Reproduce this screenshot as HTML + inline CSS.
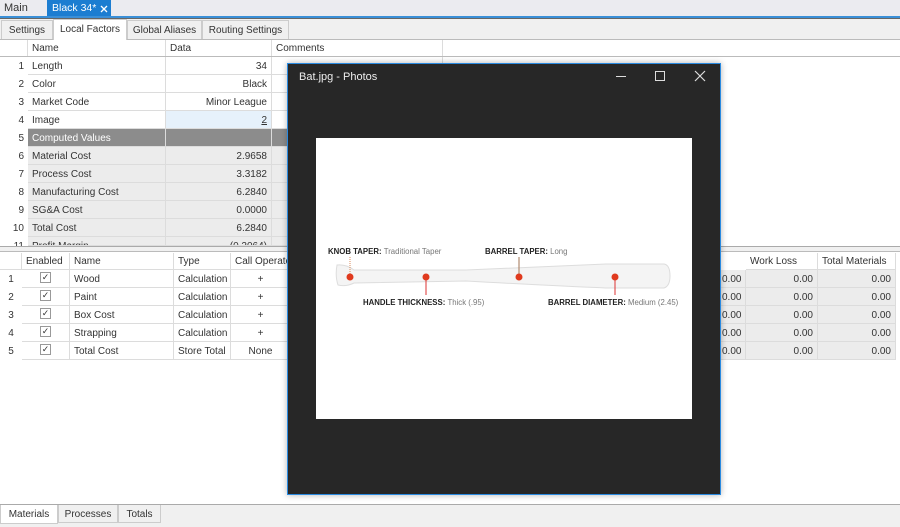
<!DOCTYPE html>
<html><head><style>
*{margin:0;padding:0;box-sizing:border-box}
body{width:900px;height:527px;position:relative;overflow:hidden;background:#fff;font-family:"Liberation Sans",sans-serif;font-size:10px;color:#333}
.a{position:absolute}
.c{position:absolute;height:18px;line-height:20px;white-space:nowrap;overflow:hidden;padding:0 4px;border-right:1px solid #dcdcdc;border-bottom:1px solid #dcdcdc}
.r{text-align:right}.m{text-align:center}
.cb{display:inline-block;width:11px;height:11px;border:1px solid #999;background:#fff;vertical-align:middle;position:relative;top:-1px;font-size:9px;line-height:9px;text-align:center;color:#333}
.tab{position:absolute;top:20px;height:19px;line-height:20px;text-align:center;border:1px solid #ccc;border-bottom:none;background:#f0f0f0;font-size:10px}
.bt{position:absolute;top:505px;height:18px;line-height:19px;text-align:center;border:1px solid #ccc;border-top:none;background:#f0f0f0}
</style></head><body>
<div class="a" style="left:0;top:0;width:900px;height:17px;background:#ebebf0"></div>
<div class="a" style="left:4px;top:2px;font-size:11px">Main</div>
<div class="a" style="left:47px;top:0;width:64px;height:17px;background:#1c7dd1"></div>
<div class="a" style="left:52px;top:2px;color:#fff;font-size:10.5px;white-space:nowrap">Black 34*</div>
<svg class="a" style="left:100px;top:5px" width="8" height="8"><path d="M1 1L7 7M7 1L1 7" stroke="#fff" stroke-width="1.3"/></svg>
<div class="a" style="left:0;top:16px;width:900px;height:2px;background:#3a8fd8"></div>
<div class="a" style="left:0;top:18px;width:900px;height:1px;background:#666"></div>
<div class="a" style="left:0;top:19px;width:900px;height:21px;background:#f0f0f0;border-bottom:1px solid #bbb"></div>
<div class="tab" style="left:1px;width:52px">Settings</div>
<div class="tab" style="left:53px;width:74px;top:19px;height:21px;background:#fff">Local Factors</div>
<div class="tab" style="left:127px;width:75px">Global Aliases</div>
<div class="tab" style="left:202px;width:87px">Routing Settings</div>

<div class="a" style="left:0;top:40px;width:900px;height:207px;overflow:hidden">
<div class="c" style="left:0;top:0;width:28px;height:17px;line-height:18px"></div>
<div class="c" style="left:28px;top:0;width:138px;height:17px;line-height:18px">Name</div>
<div class="c" style="left:166px;top:0;width:106px;height:17px;line-height:18px">Data</div>
<div class="c" style="left:272px;top:0;width:171px;height:17px;line-height:18px">Comments</div>
<div class="a" style="left:0;top:16px;width:900px;height:1px;background:#bbb"></div>
</div>
<div id="ug"></div>
<div class="a" style="left:0;top:246px;width:900px;height:1px;background:#aaa"></div>
<div class="a" style="left:0;top:247px;width:900px;height:5px;background:#f0f0f0;border-bottom:1px solid #bbb"></div>

<div class="c" style="left:0;top:253px;width:22px;height:17px;line-height:18px"></div>
<div class="c" style="left:22px;top:253px;width:48px;height:17px;line-height:18px">Enabled</div>
<div class="c" style="left:70px;top:253px;width:104px;height:17px;line-height:18px">Name</div>
<div class="c" style="left:174px;top:253px;width:57px;height:17px;line-height:18px">Type</div>
<div class="c" style="left:231px;top:253px;width:60px;height:17px;line-height:18px">Call Operator</div>
<div class="c" style="left:746px;top:253px;width:72px;height:17px;line-height:18px">Work Loss</div>
<div class="c" style="left:818px;top:253px;width:78px;height:17px;line-height:18px">Total Materials</div>
<div id="lg"></div>

<div class="a" style="left:0;top:504px;width:900px;height:23px;background:#f0f0f0;border-top:1px solid #aaa"></div>
<div class="bt" style="left:0;width:58px;background:#fff;height:19px">Materials</div>
<div class="bt" style="left:58px;width:60px">Processes</div>
<div class="bt" style="left:118px;width:43px">Totals</div>

<div class="a" style="left:287px;top:63px;width:434px;height:432px;background:#272727;border:1px solid #2a8ae0;box-shadow:0 0 6px rgba(0,0,0,.3)"></div>
<div class="a" style="left:299px;top:71px;color:#eee;font-size:11px">Bat.jpg - Photos</div>
<div class="a" style="left:616px;top:76px;width:10px;height:1px;background:#ddd"></div>
<div class="a" style="left:655px;top:71px;width:10px;height:10px;border:1px solid #ddd"></div>
<svg class="a" style="left:694px;top:70px" width="12" height="12"><path d="M1 1L11 11M11 1L1 11" stroke="#ddd" stroke-width="1.2"/></svg>
<div class="a" style="left:316px;top:138px;width:376px;height:281px;background:#fff"></div>
<svg class="a" style="left:316px;top:138px" width="376" height="281">
<path d="M21 127 Q19 138 22 147 Q30 149 38 145 L150 143 Q240 148 290 150 L348 150 Q354 148 354 138 Q354 127 348 126 L290 126 Q240 128 150 132 L38 132 Q30 126 21 127Z" fill="#f4f4f4" stroke="#ddd"/>
<line x1="34" y1="119" x2="34" y2="136" stroke="#d98a5a" stroke-dasharray="1 1"/>
<line x1="203" y1="119" x2="203" y2="136" stroke="#b08a70" stroke-width="1.2"/>
<line x1="110" y1="138" x2="110" y2="157" stroke="#d33"/>
<line x1="299" y1="138" x2="299" y2="157" stroke="#d33"/>
<circle cx="34" cy="139" r="3.5" fill="#e03a1e"/><circle cx="110" cy="139" r="3.5" fill="#e03a1e"/>
<circle cx="203" cy="139" r="3.5" fill="#e03a1e"/><circle cx="299" cy="139" r="3.5" fill="#e03a1e"/>
<g font-family="Liberation Sans" font-size="7.8"><text x="12" y="116" fill="#222" font-weight="bold">KNOB TAPER: <tspan font-weight="normal" fill="#777">Traditional Taper</tspan></text>
<text x="169" y="116" fill="#222" font-weight="bold">BARREL TAPER: <tspan font-weight="normal" fill="#777">Long</tspan></text>
<text x="47" y="167" fill="#222" font-weight="bold">HANDLE THICKNESS: <tspan font-weight="normal" fill="#777">Thick (.95)</tspan></text>
<text x="232" y="167" fill="#222" font-weight="bold">BARREL DIAMETER: <tspan font-weight="normal" fill="#777">Medium (2.45)</tspan></text></g>
</svg>
<script>
var up=[["1","Length","34",0],["2","Color","Black",0],["3","Market Code","Minor League",0],["4","Image","<u>2</u>",2],["5","Computed Values","",3],["6","Material Cost","2.9658",1],["7","Process Cost","3.3182",1],["8","Manufacturing Cost","6.2840",1],["9","SG&amp;A Cost","0.0000",1],["10","Total Cost","6.2840",1],["11","Profit Margin","(0.2064)",1]];
var h="";up.forEach(function(r,i){var t=57+i*18;var bg=r[3]==1?"#ececec":r[3]==3?"#8c8c8c":"#fff";var col=r[3]==3?"#fff":"#333";
if(t>246)return;var hh=Math.min(18,246-t);
h+='<div class="c r" style="left:0;top:'+t+'px;width:28px;height:'+hh+'px;border-right:none;border-bottom:none">'+r[0]+'</div>';
h+='<div class="c" style="left:28px;top:'+t+'px;width:138px;height:'+hh+'px;background:'+bg+';color:'+col+'">'+r[1]+'</div>';
h+='<div class="c r" style="left:166px;top:'+t+'px;width:106px;height:'+hh+'px;background:'+(r[3]==2?"#e6f1fb":bg)+';color:'+col+'">'+r[2]+'</div>';
h+='<div class="c" style="left:272px;top:'+t+'px;width:171px;height:'+hh+'px;background:'+(r[3]==3?"#8c8c8c":r[3]==1?"#ececec":"#fff")+'"></div>';});
document.getElementById("ug").innerHTML=h;
var lo=[["Wood","Calculation","+"],["Paint","Calculation","+"],["Box Cost","Calculation","+"],["Strapping","Calculation","+"],["Total Cost","Store Total","None"]];
h="";lo.forEach(function(r,i){var t=270+i*18;
h+='<div class="c m" style="left:0;top:'+t+'px;width:22px;border:none">'+(i+1)+'</div>';
h+='<div class="c m" style="left:22px;top:'+t+'px;width:48px;line-height:18px"><span class="cb">✓</span></div>';
h+='<div class="c" style="left:70px;top:'+t+'px;width:104px">'+r[0]+'</div>';
h+='<div class="c" style="left:174px;top:'+t+'px;width:57px">'+r[1]+'</div>';
h+='<div class="c m" style="left:231px;top:'+t+'px;width:60px">'+r[2]+'</div>';
h+='<div class="c r" style="left:718px;top:'+t+'px;width:28px;background:#ececec">0.00</div>';
h+='<div class="c r" style="left:746px;top:'+t+'px;width:72px;background:#ececec">0.00</div>';
h+='<div class="c r" style="left:818px;top:'+t+'px;width:78px;background:#ececec">0.00</div>';});
document.getElementById("lg").innerHTML=h;
</script>
</body></html>
